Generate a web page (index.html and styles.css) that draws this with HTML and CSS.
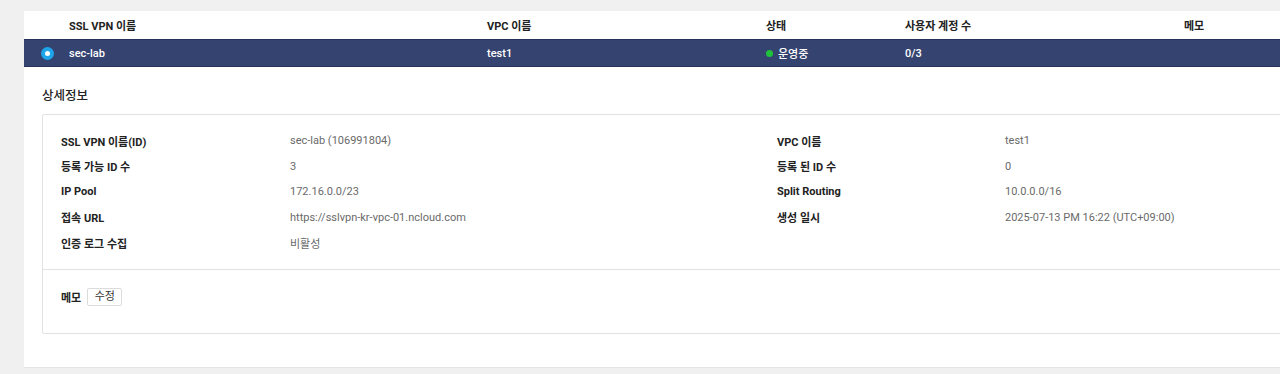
FILE: index.html
```html
<!DOCTYPE html>
<html lang="ko">
<head>
<meta charset="utf-8">
<link rel="stylesheet" href="styles.css">
</head>
<body>
<div class="panel">
  <div class="grid head">
    <div></div>
    <div>SSL VPN 이름</div>
    <div>VPC 이름</div>
    <div>상태</div>
    <div>사용자 계정 수</div>
    <div>메모</div>
  </div>
  <div class="grid row selected">
    <div class="radio-cell"><span class="radio"></span></div>
    <div>sec-lab</div>
    <div>test1</div>
    <div class="status"><span class="dot"></span>운영중</div>
    <div>0/3</div>
    <div></div>
  </div>
  <div class="detail">
    <h2 class="title">상세정보</h2>
    <div class="box">
      <div class="info">
        <div class="lab">SSL VPN 이름(ID)</div><div class="val">sec-lab (106991804)</div>
        <div class="lab">VPC 이름</div><div class="val">test1</div>
        <div class="lab">등록 가능 ID 수</div><div class="val">3</div>
        <div class="lab">등록 된 ID 수</div><div class="val">0</div>
        <div class="lab">IP Pool</div><div class="val">172.16.0.0/23</div>
        <div class="lab">Split Routing</div><div class="val">10.0.0.0/16</div>
        <div class="lab">접속 URL</div><div class="val">https://sslvpn-kr-vpc-01.ncloud.com</div>
        <div class="lab">생성 일시</div><div class="val">2025-07-13 PM 16:22 (UTC+09:00)</div>
        <div class="lab">인증 로그 수집</div><div class="val">비활성</div>
      </div>
      <div class="memo">
        <span class="lab">메모</span>
        <button class="btn">수정</button>
      </div>
    </div>
  </div>
</div>
</body>
</html>
```

FILE: styles.css
```css
html, body {
  margin: 0;
  padding: 0;
  background: #f0f0f0;
  overflow: hidden;
  font-family: Roboto, "Noto Sans CJK KR", sans-serif;
  font-size: 11px;
  color: #222;
}
.panel {
  margin: 11px 0 0 24px;
  width: 1300px;
  height: 357px;
  box-sizing: border-box;
  background: #fff;
  border-bottom: 1px solid #e4e4e4;
}
.grid {
  display: grid;
  grid-template-columns: 45px 418px 279px 139px 279px 1fr;
  align-items: center;
}
.head {
  height: 28px;
  font-weight: 700;
  color: #222;
}
.row {
  height: 28px;
  box-sizing: border-box;
}
.selected {
  background: #354370;
  border-top: 1px solid #26315a;
  border-bottom: 1px solid #26315a;
  color: #fff;
  font-weight: 500;
}
.radio-cell {
  display: flex;
  align-items: center;
  padding-left: 17px;
}
.radio {
  width: 13px;
  height: 13px;
  border-radius: 50%;
  background: #1ea5ea;
  display: flex;
  align-items: center;
  justify-content: center;
}
.radio::after {
  content: "";
  width: 5px;
  height: 5px;
  border-radius: 50%;
  background: #fff;
}
.status {
  display: flex;
  align-items: center;
  gap: 5px;
}
.dot {
  width: 7px;
  height: 7px;
  border-radius: 50%;
  background: #1fc23a;
}
.detail {
  padding: 0 0 0 18px;
}
.title {
  margin: 0;
  padding-top: 19px;
  height: 28px;
  line-height: 20px;
  font-size: 12.5px;
  font-weight: 500;
  color: #222;
}
.box {
  border: 1px solid #e2e2e2;
  border-radius: 2px;
  height: 220px;
  box-sizing: border-box;
}
.info {
  display: grid;
  grid-template-columns: 229px 487px 228px 1fr;
  grid-auto-rows: 25.5px;
  align-items: center;
  padding: 13px 0 13px 18px;
  border-bottom: 1px solid #e2e2e2;
}
.lab {
  font-weight: 700;
  color: #222;
}
.val {
  color: #6a6a6a;
}
.memo {
  display: flex;
  align-items: center;
  gap: 6px;
  padding: 18px 0 0 18px;
}
.btn {
  font-family: inherit;
  font-size: 11px;
  color: #333;
  background: #fff;
  border: 1px solid #dcdcdc;
  border-radius: 2px;
  height: 18px;
  width: 35px;
  padding: 0;
  line-height: 16px;
}
```
